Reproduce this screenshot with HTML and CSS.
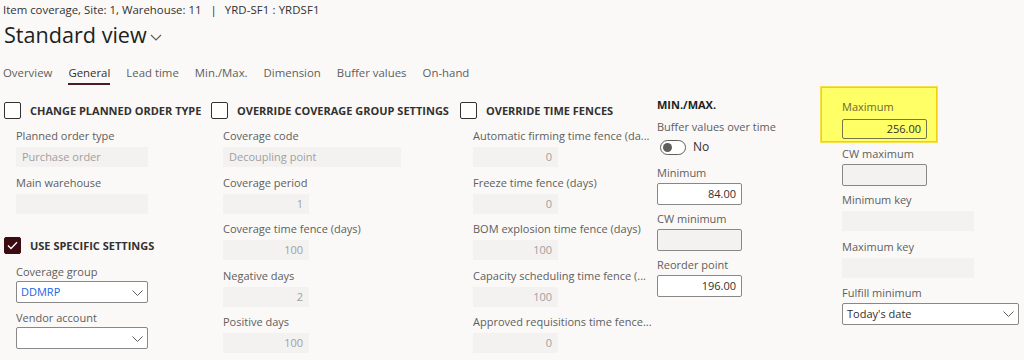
FILE: index.html
```html
<!DOCTYPE html>
<html>
<head>
<meta charset="utf-8">
<link rel="stylesheet" href="styles.css">
</head>
<body>
<div class="page">
  <div class="crumb">Item coverage, Site: 1, Warehouse: 11<span class="sep">|</span><span class="code">YRD-SF1 : YRDSF1</span></div>
  <div class="title">Standard view<svg class="title-chev" width="12" height="7" viewBox="0 0 12 7"><path d="M1 1 L6 6 L11 1" fill="none" stroke="#605e5c" stroke-width="1.2"/></svg></div>
  <nav class="tabs">
    <span class="tab">Overview</span>
    <span class="tab active">General</span>
    <span class="tab">Lead time</span>
    <span class="tab">Min./Max.</span>
    <span class="tab">Dimension</span>
    <span class="tab">Buffer values</span>
    <span class="tab">On-hand</span>
  </nav>
  <div class="cols">
    <section class="col c1">
      <div class="sec-head"><span class="cb"></span><span class="sec-title">CHANGE PLANNED ORDER TYPE</span></div>
      <div class="fields">
        <div class="field"><div class="lbl">Planned order type</div><div class="inp dis w132">Purchase order</div></div>
        <div class="field"><div class="lbl">Main warehouse</div><div class="inp dis w132"></div></div>
      </div>
      <div class="sec-head sec2"><span class="cb on"><svg width="11" height="9" viewBox="0 0 11 9"><path d="M1 4.5 L4 7.5 L10 1.2" fill="none" stroke="#ffffff" stroke-width="1.3"/></svg></span><span class="sec-title">USE SPECIFIC SETTINGS</span></div>
      <div class="fields">
        <div class="field bord"><div class="lbl">Coverage group</div><div class="inp sel w132"><span class="blue">DDMRP</span><svg class="chev" width="11" height="6" viewBox="0 0 11 6"><path d="M0.5 0.5 L5.5 5.5 L10.5 0.5" fill="none" stroke="#605e5c" stroke-width="1"/></svg></div></div>
        <div class="field bord"><div class="lbl">Vendor account</div><div class="inp sel w132"><span></span><svg class="chev" width="11" height="6" viewBox="0 0 11 6"><path d="M0.5 0.5 L5.5 5.5 L10.5 0.5" fill="none" stroke="#605e5c" stroke-width="1"/></svg></div></div>
      </div>
    </section>
    <section class="col c2">
      <div class="sec-head"><span class="cb"></span><span class="sec-title">OVERRIDE COVERAGE GROUP SETTINGS</span></div>
      <div class="fields">
        <div class="field"><div class="lbl">Coverage code</div><div class="inp dis w178">Decoupling point</div></div>
        <div class="field"><div class="lbl">Coverage period</div><div class="inp dis num w86">1</div></div>
        <div class="field"><div class="lbl">Coverage time fence (days)</div><div class="inp dis num w86">100</div></div>
        <div class="field"><div class="lbl">Negative days</div><div class="inp dis num w86">2</div></div>
        <div class="field"><div class="lbl">Positive days</div><div class="inp dis num w86">100</div></div>
      </div>
    </section>
    <section class="col c3">
      <div class="sec-head"><span class="cb"></span><span class="sec-title">OVERRIDE TIME FENCES</span></div>
      <div class="fields">
        <div class="field"><div class="lbl">Automatic firming time fence (da...</div><div class="inp dis num w85">0</div></div>
        <div class="field"><div class="lbl">Freeze time fence (days)</div><div class="inp dis num w85">0</div></div>
        <div class="field"><div class="lbl">BOM explosion time fence (days)</div><div class="inp dis num w85">100</div></div>
        <div class="field"><div class="lbl">Capacity scheduling time fence (...</div><div class="inp dis num w85">100</div></div>
        <div class="field"><div class="lbl">Approved requisitions time fence...</div><div class="inp dis num w85">0</div></div>
      </div>
    </section>
    <section class="col c4">
      <div class="grp-title">MIN./MAX.</div>
      <div class="lbl">Buffer values over time</div>
      <div class="toggle-row"><span class="toggle"><span class="knob"></span></span><span class="toggle-txt">No</span></div>
      <div class="field bord"><div class="lbl">Minimum</div><div class="inp box num w85">84.00</div></div>
      <div class="field bord"><div class="lbl">CW minimum</div><div class="inp box grey w85"></div></div>
      <div class="field bord"><div class="lbl">Reorder point</div><div class="inp box num w85">196.00</div></div>
    </section>
    <section class="col c5">
      <div class="hl">
        <div class="lbl">Maximum</div>
        <div class="inp box hlinp num w85">256.00</div>
      </div>
      <div class="fields">
        <div class="field bord"><div class="lbl">CW maximum</div><div class="inp box grey w85"></div></div>
        <div class="field"><div class="lbl">Minimum key</div><div class="inp dis w132"></div></div>
        <div class="field"><div class="lbl">Maximum key</div><div class="inp dis w132"></div></div>
        <div class="field bord"><div class="lbl">Fulfill minimum</div><div class="inp sel w177"><span class="dark">Today's date</span><svg class="chev" width="11" height="6" viewBox="0 0 11 6"><path d="M0.5 0.5 L5.5 5.5 L10.5 0.5" fill="none" stroke="#605e5c" stroke-width="1"/></svg></div></div>
      </div>
    </section>
  </div>
</div>
</body>
</html>
```

FILE: styles.css
```css
* { box-sizing: border-box; }
html, body { margin: 0; padding: 0; }
body {
  background: #faf9f8;
  font-family: "Open Sans", "Noto Sans", "Liberation Sans", sans-serif;
  color: #323130;
  width: 1024px;
  height: 360px;
  overflow: hidden;
}
.page { padding-left: 4px; }
.crumb {
  font-size: 11.4px;
  line-height: 16px;
  padding-top: 2px;
  margin-left: -1px;
  color: #323130;
  white-space: nowrap;
}
.sep { margin: 0 8px 0 9px; }
.code { letter-spacing: 0.1px; }
.title {
  display: flex;
  align-items: center;
  font-size: 21.6px;
  line-height: 28px;
  margin-top: 3px;
  color: #201f1e;
  font-weight: 500;
}
.title-chev { margin-left: 3px; margin-top: 4px; }
.tabs {
  display: flex;
  gap: 16px;
  margin-top: 16px;
  margin-left: -1px;
}
.tab {
  font-size: 11.4px;
  line-height: 16px;
  color: #605e5c;
  padding-bottom: 2px;
  border-bottom: 2px solid transparent;
}
.tab.active { color: #323130; border-bottom-color: #4b1d23; }
.cols { display: flex; align-items: flex-start; }
.col { display: flex; flex-direction: column; align-items: flex-start; }
.c1 { width: 207px; padding-top: 15px; }
.c2 { width: 249px; padding-top: 15px; }
.c3 { width: 197px; padding-top: 15px; }
.c4 { width: 164px; padding-top: 12px; }
.c5 { flex: 1; padding-top: 2px; }
.sec-head { display: flex; align-items: center; gap: 9px; height: 20px; }
.sec2 { margin-top: 14.5px; }
.cb {
  width: 17px; height: 17px;
  border: 1px solid #323130;
  border-radius: 2px;
  background: #ffffff;
  display: flex; align-items: center; justify-content: center;
}
.cb.on { background: #3b0d12; border-color: #3b0d12; }
.sec-title { font-size: 11px; font-weight: 700; color: #323130; white-space: nowrap; }
.fields { padding-left: 12px; margin-top: 8px; display: flex; flex-direction: column; }
.c3 .fields { padding-left: 13px; }
.c5 .fields { padding-left: 21px; margin-top: 4px; }
.field { margin-bottom: 7.5px; display: flex; flex-direction: column; }
.lbl {
  font-size: 11px;
  line-height: 16px;
  color: #605e5c;
  white-space: nowrap;
  margin-bottom: 3px;
}
.field.bord { margin-bottom: 6.5px; }
.field.bord .lbl { margin-bottom: 1.5px; }
.inp {
  height: 20px;
  font-size: 11px;
  line-height: 20px;
  padding: 0 6px;
  white-space: nowrap;
}
.dis { background: #f3f2f1; color: #a19f9d; }
.num { text-align: right; }
.box {
  height: 22px;
  line-height: 20px;
  border: 1px solid #8a8886;
  border-radius: 2px;
  background: #ffffff;
  color: #323130;
  padding: 0 5px;
}
.grey { background: #f3f2f1; }
.sel {
  height: 22px;
  border: 1px solid #8a8886;
  border-radius: 2px;
  background: #ffffff;
  display: flex; align-items: center; justify-content: space-between;
  padding: 0 4px 0 4px;
}
.blue { color: #2266e3; }
.dark { color: #323130; }
.chev { margin-top: 1px; }
.w132 { width: 132px; }
.w178 { width: 178px; }
.w86 { width: 86px; }
.w85 { width: 85px; }
.w177 { width: 177px; }
.grp-title { font-size: 11px; font-weight: 700; line-height: 16px; margin-bottom: 6px; color: #201f1e; }
.c4 .lbl { margin-bottom: 4px; }
.c4 .field .lbl { margin-bottom: 1.5px; }
.toggle-row { display: flex; align-items: center; gap: 7px; margin-bottom: 10px; margin-left: 3px; }
.toggle {
  width: 26px; height: 15px;
  border: 1px solid #605e5c;
  border-radius: 8px;
  display: flex; align-items: center;
  padding-left: 2px;
  background: #ffffff;
}
.knob { width: 9px; height: 9px; border-radius: 50%; background: #605e5c; }
.toggle-txt { font-size: 12px; line-height: 16px; color: #323130; }
.hl {
  background: #ffff66;
  border: 1px solid #f2cf10;
  box-shadow: 0 0 0 1px #f7e04a;
  padding: 11px 9px 2px 20px;
  display: flex; flex-direction: column;
}
.hl .lbl { color: #6b6936; margin-bottom: 4px; }
.hlinp { height: 20px; line-height: 18px; background: transparent; border-color: #76744a; }
```
